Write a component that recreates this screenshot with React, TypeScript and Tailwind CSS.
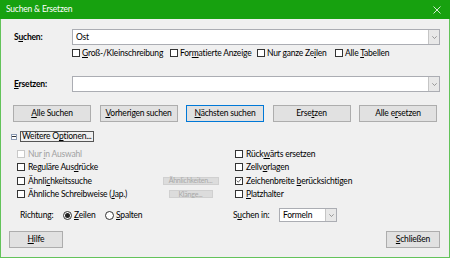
import React from 'react'

const font = { fontFamily: 'Lato, "Noto Sans", sans-serif' }

const U: React.FC<{ children: React.ReactNode }> = ({ children }) => (
    <span className="underline underline-offset-[1px]">{children}</span>
)

const Check: React.FC<{ checked?: boolean; disabled?: boolean }> = ({ checked, disabled }) => (
    <span
        className={`w-[8px] h-[8px] shrink-0 border bg-white flex items-center justify-center ${disabled ? 'border-[#c8c8c8]' : 'border-[#333]'}`}
    >
        {checked && (
            <svg width="7" height="7" viewBox="0 0 7 7" fill="none">
                <path d="M0.8 3.6 L2.7 5.5 L6.2 1.3" stroke="#333" strokeWidth="0.9" />
            </svg>
        )}
    </span>
)

const Radio: React.FC<{ checked?: boolean }> = ({ checked }) => (
    <span className="w-[9px] h-[9px] shrink-0 rounded-full border border-[#333] bg-white flex items-center justify-center">
        {checked && <span className="w-[5px] h-[5px] rounded-full bg-[#222]" />}
    </span>
)

const Btn: React.FC<{ children: React.ReactNode; focused?: boolean; className?: string }> = ({ children, focused, className }) => (
    <div
        className={`h-[17px] flex items-center justify-center whitespace-nowrap bg-[#e1e1e1] border ${focused ? 'border-[#0078d7]' : 'border-[#adadad]'} ${className ?? ''}`}
    >
        {children}
    </div>
)

const Combo: React.FC<{ value?: string; className?: string }> = ({ value, className }) => (
    <div className={`flex h-full bg-white border border-[#abadb3] ${className ?? ''}`}>
        <div className="flex-1 pl-[3px] flex items-center">{value}</div>
        <div className="w-[11px] bg-[#e8e8e8] border-l border-[#c5c5c5] flex items-center justify-center">
            <svg width="5" height="3" viewBox="0 0 5 3" fill="none">
                <path d="M0.3 0.3 L2.5 2.5 L4.7 0.3" stroke="#777" strokeWidth="0.7" />
            </svg>
        </div>
    </div>
)

export default function App() {
    return (
        <div
            className="w-[450px] h-[258px] flex flex-col bg-[#f0f0f0] border-x border-b border-[#63c35a] text-[8.5px] tracking-[-0.2px] leading-none text-black whitespace-nowrap"
            style={font}
        >
            {/* Title bar */}
            <div className="h-[19px] -mx-px bg-[#17a10f] text-white flex items-center justify-between pl-[6px] pr-[9px]">
                <span>Suchen &amp; Ersetzen</span>
                <svg width="8" height="8" viewBox="0 0 8 8" fill="none">
                    <path d="M0.5 0.5 L7.5 7.5 M7.5 0.5 L0.5 7.5" stroke="#fff" strokeWidth="0.8" />
                </svg>
            </div>

            {/* Suchen */}
            <div className="mt-[10px] h-[16px] flex items-center">
                <div className="w-[71px] pl-[13px] font-bold">
                    S<U>u</U>chen:
                </div>
                <Combo value="Ost" className="flex-1 mr-[9px]" />
            </div>

            {/* Search flags */}
            <div className="mt-[3px] h-[10px] flex items-center pl-[71px]">
                <div className="w-[98px] flex items-center gap-[2px]">
                    <Check />
                    <span><U>G</U>roß-/Kleinschreibung</span>
                </div>
                <div className="w-[87px] flex items-center gap-[2px]">
                    <Check />
                    <span>For<U>m</U>atierte Anzeige</span>
                </div>
                <div className="w-[78px] flex items-center gap-[2px]">
                    <Check />
                    <span>Nur ganze Ze<U>i</U>len</span>
                </div>
                <div className="flex items-center gap-[2px]">
                    <Check />
                    <span>Alle <U>T</U>abellen</span>
                </div>
            </div>

            {/* Ersetzen */}
            <div className="mt-[18px] h-[16px] flex items-center">
                <div className="w-[71px] pl-[13px] font-bold">
                    <U>E</U>rsetzen:
                </div>
                <Combo className="flex-1 mr-[9px]" />
            </div>

            {/* Action buttons */}
            <div className="mt-[13px] flex justify-between pl-[12px] pr-[12px]">
                <Btn className="w-[78px]"><span><U>A</U>lle Suchen</span></Btn>
                <Btn className="w-[78px]"><span><U>V</U>orherigen suchen</span></Btn>
                <Btn className="w-[78px]" focused><span><U>N</U>ächsten suchen</span></Btn>
                <Btn className="w-[78px]"><span>Erse<U>t</U>zen</span></Btn>
                <Btn className="w-[78px]"><span>Alle e<U>r</U>setzen</span></Btn>
            </div>

            {/* More options */}
            <div className="mt-[9px] h-[11px] flex items-center pl-[10px]">
                <span className="w-[6px] h-[6px] border border-[#8c9bb4] bg-white flex items-center justify-center">
                    <span className="w-[4px] h-px bg-[#333]" />
                </span>
                <span className="ml-[3px] h-[11px] px-[1px] border border-[#555] flex items-center">
                    Weitere O<U>p</U>tionen...
                </span>
            </div>

            {/* Options grid */}
            <div className="mt-[5px] flex">
                <div className="w-[234px] pl-[16px] pr-[16px] flex flex-col">
                    <div className="h-[13.5px] flex items-center gap-[3px] text-[#a0a0a0]">
                        <Check disabled />
                        <span>Nur <U>i</U>n Auswahl</span>
                    </div>
                    <div className="h-[13.5px] flex items-center gap-[3px]">
                        <Check />
                        <span>Reguläre Aus<U>d</U>rücke</span>
                    </div>
                    <div className="h-[13.5px] flex items-center">
                        <div className="flex-1 flex items-center gap-[3px]">
                            <Check />
                            <span>Ähnli<U>c</U>hkeitssuche</span>
                        </div>
                        <div className="w-[57px] flex justify-center">
                            <span className="w-[56px] h-[8px] bg-[#dcdcdc] border border-[#d0d0d0] text-[#a8a8a8] text-[7px] flex items-center justify-center">
                                Ähnlichkeiten...
                            </span>
                        </div>
                    </div>
                    <div className="h-[13.5px] flex items-center">
                        <div className="flex-1 flex items-center gap-[3px]">
                            <Check />
                            <span>Ähnliche Schreibweise (<U>J</U>ap.)</span>
                        </div>
                        <div className="w-[57px] flex justify-center">
                            <span className="w-[44px] h-[8px] bg-[#dcdcdc] border border-[#d0d0d0] text-[#a8a8a8] text-[7px] flex items-center justify-center">
                                Klänge...
                            </span>
                        </div>
                    </div>
                </div>
                <div className="flex flex-col">
                    <div className="h-[13.5px] flex items-center gap-[3px]">
                        <Check />
                        <span>Rück<U>w</U>ärts ersetzen</span>
                    </div>
                    <div className="h-[13.5px] flex items-center gap-[3px]">
                        <Check />
                        <span>Zellv<U>o</U>rlagen</span>
                    </div>
                    <div className="h-[13.5px] flex items-center gap-[3px]">
                        <Check checked />
                        <span>Zeichenbreite <U>b</U>erücksichtigen</span>
                    </div>
                    <div className="h-[13.5px] flex items-center gap-[3px]">
                        <Check />
                        <span><U>P</U>latzhalter</span>
                    </div>
                </div>
            </div>

            {/* Direction / search in */}
            <div className="mt-[7px] h-[14px] flex items-center">
                <div className="w-[232px] pl-[19px] flex items-center">
                    <span className="w-[43px]">Richtung:</span>
                    <div className="w-[42px] flex items-center gap-[2px]">
                        <Radio checked />
                        <span><U>Z</U>eilen</span>
                    </div>
                    <div className="flex items-center gap-[2px]">
                        <Radio />
                        <span><U>S</U>palten</span>
                    </div>
                </div>
                <span className="w-[46px]">S<U>u</U>chen in:</span>
                <Combo value="Formeln" className="w-[58px]" />
            </div>

            {/* Bottom buttons */}
            <div className="mt-[9px] flex justify-between pl-[8px] pr-[9px]">
                <Btn className="w-[54px]"><span><U>H</U>ilfe</span></Btn>
                <Btn className="w-[54px]"><span><U>S</U>chließen</span></Btn>
            </div>
        </div>
    )
}
